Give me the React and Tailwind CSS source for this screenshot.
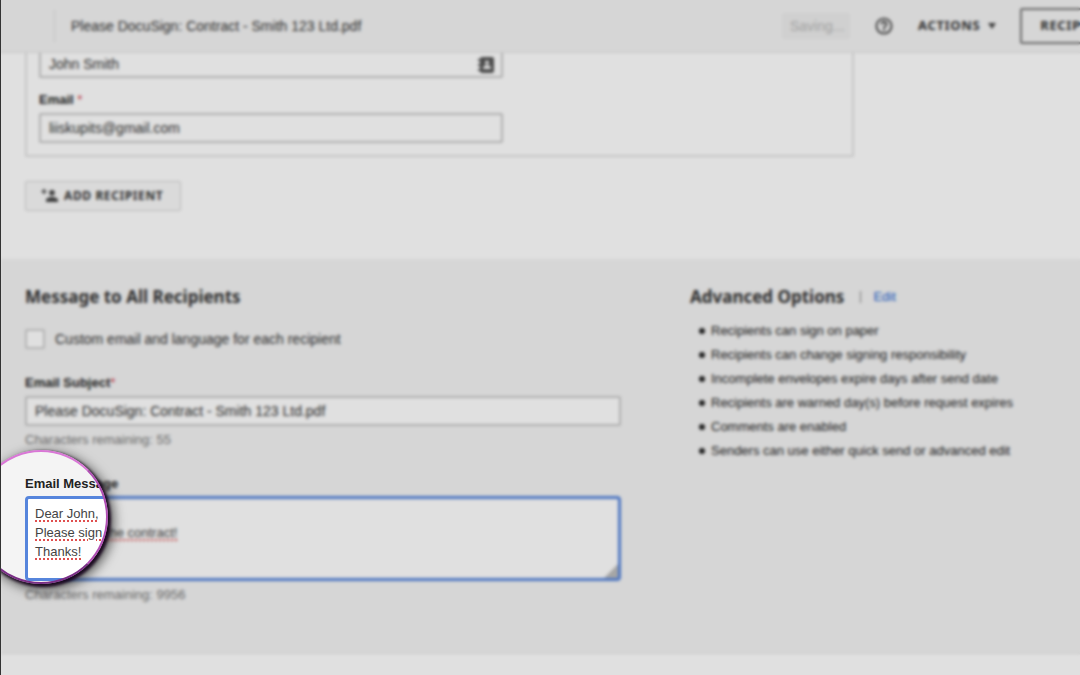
import React, { useState } from 'react';
import { MdHelpOutline } from 'react-icons/md';

const advancedOptions = [
  'Recipients can sign on paper',
  'Recipients can change signing responsibility',
  'Incomplete envelopes expire days after send date',
  'Recipients are warned day(s) before request expires',
  'Comments are enabled',
  'Senders can use either quick send or advanced edit',
];

const AddressBookIcon = () => (
  <svg className="h-[18px] w-[18px]" viewBox="0 0 18 18">
    <rect x="3" y="1" width="14" height="16" rx="2" fill="#555" />
    <path d="M1 4h4M1 9h4M1 14h4" stroke="#555" strokeWidth="2" />
    <circle cx="10" cy="6.500" r="2" fill="#fff" />
    <path d="M6 13c0-3 2-4 4-4s4 1 4 4z" fill="#fff" />
  </svg>
);

const AddPersonIcon = () => (
  <svg className="h-5 w-5" viewBox="0 0 20 20" fill="#444">
    <path d="M12 4a2.800 2.800 0 1 1 0 5.600A2.800 2.800 0 0 1 12 4zM6 16v-2c0-2 3.500-3 6-3s6 1 6 3v2z" />
    <path d="M3.200 3h1.600v1.700h1.700v1.600H4.800V8H3.200V6.300H1.500V4.700h1.700z" />
  </svg>
);

const Header = () => (
  <header className="relative z-10 flex h-[53px] items-center border-b border-[#e4e4e4] bg-[#f4f4f4]">
    <div className="ml-[54px] h-8 w-px shrink-0 bg-[#dcdcdc]" />
    <h1 className="min-w-0 flex-1 truncate pl-4 text-[14px] text-[#333]">
      Please DocuSign: Contract - Smith 123 Ltd.pdf
    </h1>
    <div className="flex w-[298px] shrink-0 items-center overflow-hidden">
      <span className="w-[68px] shrink-0 rounded-xs bg-[#ededed] py-[3px] pl-2 text-[14px] leading-5 text-[#b8b8b8]">
        Saving...
      </span>
      <button aria-label="Help" className="ml-6 shrink-0 text-[#333]">
        <MdHelpOutline className="h-5 w-5" />
      </button>
      <button className="ml-6 flex shrink-0 items-center gap-2 font-['Noto_Sans',sans-serif] text-[13px] font-bold tracking-wider text-[#333]">
        ACTIONS
        <svg className="h-[6px] w-2" viewBox="0 0 8 6" fill="#444">
          <path d="M0 0h8L4 6z" />
        </svg>
      </button>
      <button className="ml-6 h-9 shrink-0 rounded-xs border-2 border-[#777] px-[18px] font-['Noto_Sans',sans-serif] text-[13px] font-bold tracking-wider text-[#333]">
        RECIPIENT PREVIEW
      </button>
    </div>
  </header>
);

const RecipientSection = () => {
  const [name, setName] = useState('John Smith');
  const [email, setEmail] = useState('liiskupits@gmail.com');

  return (
    <section className="pb-12 pl-6">
      {/* The top of the card is scrolled under the header */}
      <div className="-mt-1 max-w-[829px] rounded-xs border-x-2 border-b-2 border-[#e2e2e2] px-3 pb-3">
        <div className="relative max-w-[464px]">
          <input
            aria-label="Name"
            value={name}
            onChange={(e) => setName(e.target.value)}
            className="block h-[29px] w-full rounded-xs border-2 border-[#c8c8c8] bg-white px-2 text-[14px] text-[#333]"
          />
          <button aria-label="Address book" className="absolute right-2 top-[7px]">
            <AddressBookIcon />
          </button>
        </div>
        <label htmlFor="email" className="mt-[13px] block pb-1 text-[13px] font-bold leading-[18px] text-[#222]">
          Email <span className="font-normal text-[#d13239]">*</span>
        </label>
        <input
          id="email"
          type="email"
          value={email}
          onChange={(e) => setEmail(e.target.value)}
          className="block h-[30px] w-full max-w-[464px] rounded-xs border-2 border-[#c8c8c8] bg-white px-2 text-[14px] text-[#333]"
        />
      </div>
      <button className="mt-6 flex h-[30px] w-[156px] items-center gap-1 rounded-xs border border-[#d4d4d4] bg-[#f9f9f9] pl-[14px] font-['Noto_Sans',sans-serif] text-[12px] font-bold tracking-wider text-[#333]">
        <AddPersonIcon />
        ADD RECIPIENT
      </button>
    </section>
  );
};

const MessageForm = () => {
  const [custom, setCustom] = useState(false);
  const [subject, setSubject] = useState('Please DocuSign: Contract - Smith 123 Ltd.pdf');
  const [message, setMessage] = useState('Dear John,\nPlease sign the contract!\nThanks!');

  return (
    <div className="min-w-0 max-w-[597px] flex-1">
      <h2 className="font-['Noto_Sans',sans-serif] text-[17px] font-bold leading-6 text-[#333]">
        Message to All Recipients
      </h2>
      <label className="mt-5 flex items-center gap-[10px] text-[14px] leading-5 text-[#333]">
        <input
          type="checkbox"
          checked={custom}
          onChange={(e) => setCustom(e.target.checked)}
          className="h-5 w-5 appearance-none rounded-xs border-2 border-[#ccc] bg-white checked:bg-[#4a7bd8]"
        />
        Custom email and language for each recipient
      </label>
      <label htmlFor="subject" className="mt-6 block pb-[3px] text-[13px] font-bold leading-5 text-[#222]">
        Email Subject<span className="font-normal text-[#d13239]">*</span>
      </label>
      <input
        id="subject"
        value={subject}
        onChange={(e) => setSubject(e.target.value)}
        className="block h-[30px] w-full rounded-xs border-2 border-[#c8c8c8] bg-white px-2 text-[14px] text-[#333]"
      />
      <p className="mt-1 text-[13px] leading-5 text-[#777]">Characters remaining: 55</p>
      <label htmlFor="message" className="mt-6 block pb-[2px] text-[13px] font-bold leading-5 text-[#222]">
        Email Message
      </label>
      <div className="relative">
        <textarea
          id="message"
          value={message}
          onChange={(e) => setMessage(e.target.value)}
          spellCheck={false}
          className="block h-[85px] w-full resize-none rounded-sm border-[3px] border-[#5685dc] bg-white px-[7px] pt-[5px] text-[13px] leading-[19px] text-[#444] underline decoration-[#e04f4f] decoration-dotted decoration-2 underline-offset-2 outline-none"
        />
        <svg className="absolute bottom-[3px] right-[3px] h-[14px] w-[14px]" viewBox="0 0 14 14" fill="#bdbdbd">
          <path d="M14 0v14H0z" />
        </svg>
      </div>
      <p className="mt-1 text-[13px] leading-5 text-[#777]">Characters remaining: 9956</p>
    </div>
  );
};

const AdvancedOptions = () => (
  <div className="w-[390px] shrink-0">
    <div className="flex items-center">
      <h2 className="font-['Noto_Sans',sans-serif] text-[17px] font-bold leading-6 text-[#333]">Advanced Options</h2>
      <span className="ml-4 mr-3 h-3 w-px bg-[#888]" />
      <a href="#advanced" className="text-[13px] text-[#2463d1]">Edit</a>
    </div>
    <ul className="mt-[10px] pl-[9px] text-[13px] leading-6 text-[#222]">
      {advancedOptions.map((option) => (
        <li key={option} className="flex items-center gap-[6px]">
          <span className="h-[6px] w-[6px] rounded-full bg-[#222]" />
          {option}
        </li>
      ))}
    </ul>
  </div>
);

// Dims and softens the page everywhere but in a round lens
const Spotlight = () => (
  <div className="pointer-events-none absolute inset-0 z-20 overflow-hidden">
    <div className="absolute inset-0 backdrop-blur-[1px] [mask-image:radial-gradient(circle_at_41px_517px,transparent_65px,black_66px)]" />
    <div className="absolute inset-0 bg-black/12 backdrop-blur-[1px] [mask-image:radial-gradient(circle_at_41px_517px,transparent_65px,black_66px)]" />
    <div className="absolute left-[-26px] top-[450px] h-[134px] w-[134px] rounded-full border-2 border-t-[#d977d6] border-l-[#d977d6] border-r-[#b04fb4] border-b-[#7a2f86] shadow-[2px_2px_3px_1px_rgba(20,0,25,0.9),4px_4px_12px_2px_rgba(0,0,0,0.6)]" />
  </div>
);

const App = () => (
  <div className="relative min-h-screen overflow-hidden bg-white font-['Liberation_Sans',Arial,sans-serif]">
    <Header />
    <main className="pl-px">
      <RecipientSection />
      <section className="flex gap-[69px] border-b border-[#e6e6e6] bg-[#f4f4f4] pb-12 pl-6 pt-[26px]">
        <MessageForm />
        <AdvancedOptions />
      </section>
    </main>
    <Spotlight />
    <div className="absolute inset-y-0 left-0 z-30 w-px bg-[#333]" />
  </div>
);

export default App;
